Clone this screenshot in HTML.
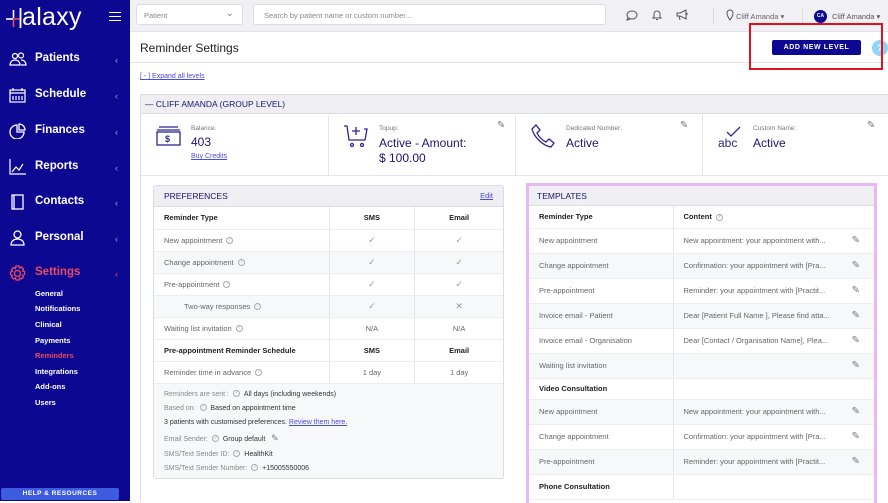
<!DOCTYPE html>
<html><head><meta charset="utf-8"><style>
*{box-sizing:border-box;margin:0;padding:0}
body{width:888px;height:501px;overflow:hidden;font-family:"Liberation Sans",sans-serif;background:#fff;position:relative;color:#333}
.a{position:absolute}
#sb{left:0;top:0;width:130px;height:501px;background:#0d0891;color:#fff}
.nav{position:absolute;left:35px;font-size:11.5px;font-weight:bold;color:#fff}
.ic{position:absolute;left:9px}
.chev{position:absolute;left:115px;font-size:9px;color:#aab}
.sub{position:absolute;left:35px;font-size:7.5px;font-weight:bold;color:#fff}
#top{left:130px;top:0;width:758px;height:32px;background:#f1f1f5;border-bottom:1px solid #e2e2ea}
.box{background:#fff;border:1px solid #dcdce4;border-radius:3px}
.g{color:#777;font-size:7.5px}
table{border-collapse:collapse;width:100%;font-size:7.5px}
td{height:22px;padding:0 10px;color:#666;border-bottom:1px solid #ececf2}
.hd td{color:#222;font-weight:bold}
.c{text-align:center;border-left:1px solid #e4e4ea}
.alt td{background:#f7f8fa}
.q{display:inline-block;width:7px;height:7px;border:1px solid #aaa;border-radius:50%;font-size:5px;line-height:5px;text-align:center;color:#aaa;margin-left:4px;vertical-align:middle}
.ck{color:#999;font-size:9px}
.t td{height:25px;padding-top:0;padding-bottom:0}
.pen{color:#777;font-size:10px;text-align:right;padding-right:14px}
</style></head><body>
<div id="sb" class="a">
 <svg class="a" style="left:6px;top:7px" width="16" height="21" viewBox="0 0 16 21"><path d="M0 12h7" stroke="#fff" stroke-width="1.6"/><path d="M7 12h8" stroke="#e94a64" stroke-width="1.6"/><path d="M7.5 3v8" stroke="#fff" stroke-width="1.6"/><path d="M7.5 13v7" stroke="#e94a64" stroke-width="1.6"/><path d="M14.5 1v20" stroke="#fff" stroke-width="1.8"/></svg>
 <div class="a" style="left:22px;top:3px;font-size:25px;color:#fff;letter-spacing:0.3px">alaxy</div>
 <div class="a" style="left:109px;top:12px;width:12px;height:9px;border-top:1.5px solid #fff;border-bottom:1.5px solid #fff"><div style="margin-top:2.5px;border-top:1.5px solid #fff"></div></div>
 <svg class="ic" style="top:52px" width="18" height="14" viewBox="0 0 18 14" fill="none" stroke="#fff" stroke-width="1.2"><circle cx="6" cy="4" r="2.5"/><path d="M1 13c0-3 2-5 5-5s5 2 5 5z"/><circle cx="12" cy="3.5" r="2.5"/><path d="M12 8c3 0 5 2 5 5h-5"/></svg>
 <div class="nav" style="top:52px">Patients</div><div class="chev" style="top:55px">&lsaquo;</div>
 <svg class="ic" style="top:88px" width="17" height="15" viewBox="0 0 17 15" fill="none" stroke="#fff" stroke-width="1.2"><rect x="1" y="2" width="15" height="12"/><path d="M1 5h15M4 0v3M13 0v3M4 8v4M7 8v4M10 8v4M13 8v4"/></svg>
 <div class="nav" style="top:88px">Schedule</div><div class="chev" style="top:91px">&lsaquo;</div>
 <svg class="ic" style="top:123px" width="17" height="16" viewBox="0 0 17 16" fill="none" stroke="#fff" stroke-width="1.3"><path d="M8 2a7 7 0 1 0 7 7H8z"/><path d="M10 1v6h6a6 6 0 0 0-6-6z"/></svg>
 <div class="nav" style="top:124px">Finances</div><div class="chev" style="top:127px">&lsaquo;</div>
 <svg class="ic" style="top:159px" width="17" height="16" viewBox="0 0 17 16" fill="none" stroke="#fff" stroke-width="1.2"><path d="M1 0v15h16M3 13l4-5 3 3 4-6"/></svg>
 <div class="nav" style="top:160px">Reports</div><div class="chev" style="top:163px">&lsaquo;</div>
 <svg class="ic" style="top:194px" width="17" height="16" viewBox="0 0 17 16" fill="none" stroke="#fff" stroke-width="1.3"><rect x="3" y="1" width="11" height="14"/><path d="M5 1v14"/></svg>
 <div class="nav" style="top:195px">Contacts</div><div class="chev" style="top:198px">&lsaquo;</div>
 <svg class="ic" style="top:230px" width="17" height="16" viewBox="0 0 17 16" fill="none" stroke="#fff" stroke-width="1.3"><circle cx="8.5" cy="4.5" r="3.5"/><path d="M2 15c0-4 3-6 6.5-6s6.5 2 6.5 6z"/></svg>
 <div class="nav" style="top:231px">Personal</div><div class="chev" style="top:234px">&lsaquo;</div>
 <svg class="ic" style="top:265px" width="17" height="17" viewBox="0 0 17 17" fill="none" stroke="#e94a64" stroke-width="1.3"><circle cx="8.5" cy="8.5" r="3"/><path d="M7 1h3l.5 2 2-1 2 2-1 2 2 .5v3l-2 .5 1 2-2 2-2-1-.5 2H7l-.5-2-2 1-2-2 1-2-2-.5V7l2-.5-1-2 2-2 2 1z"/></svg>
 <div class="nav" style="top:266px;color:#e94a64">Settings</div><div class="chev" style="top:269px;color:#e94a64">&lsaquo;</div>
 <div class="sub" style="top:289px">General</div>
 <div class="sub" style="top:304px">Notifications</div>
 <div class="sub" style="top:320px">Clinical</div>
 <div class="sub" style="top:336px">Payments</div>
 <div class="sub" style="top:351px;color:#e94a64">Reminders</div>
 <div class="sub" style="top:367px">Integrations</div>
 <div class="sub" style="top:382px">Add-ons</div>
 <div class="sub" style="top:398px">Users</div>
 <div class="a" style="left:1px;top:488px;width:118px;height:12px;background:#3c5be0;border-radius:2px;font-size:6.5px;font-weight:bold;text-align:center;line-height:12px;letter-spacing:.5px">HELP &amp; RESOURCES</div>
</div>
<div id="top" class="a">
 <div class="a box" style="left:6px;top:4px;width:107px;height:21px;font-size:7.5px;color:#888;padding:6px 7px">Patient<span style="position:absolute;right:8px;top:3px;font-size:10px;color:#888">&#8964;</span></div>
 <div class="a box" style="left:123px;top:4px;width:353px;height:21px;font-size:7.5px;color:#888;padding:6px 10px">Search by patient name or custom number...</div>
 <svg class="a" style="left:496px;top:10px" width="12" height="11" viewBox="0 0 12 11" fill="none" stroke="#555"><ellipse cx="6" cy="5" rx="5" ry="4"/><path d="M2 8l-1 2 3-1"/></svg>
 <svg class="a" style="left:522px;top:9px" width="10" height="12" viewBox="0 0 10 12" fill="none" stroke="#555"><path d="M2 8V5a3 3 0 0 1 6 0v3l1 1H1zM4 10.5h2"/></svg>
 <svg class="a" style="left:546px;top:9px" width="13" height="12" viewBox="0 0 13 12" fill="none" stroke="#555"><path d="M1 4h3l6-3v9L4 7H1zM3 7l1 4M11 4v2"/></svg>
 <div class="a" style="left:583px;top:8px;width:1px;height:16px;background:#ddd"></div>
 <svg class="a" style="left:596px;top:9px" width="8" height="12" viewBox="0 0 8 12" fill="none" stroke="#555"><path d="M4 11C1 7 1 5 1 4a3 3 0 0 1 6 0c0 1 0 3-3 7z"/></svg>
 <div class="a" style="left:606px;top:12px;font-size:7.5px;color:#666">Cliff Amanda &#9662;</div>
 <div class="a" style="left:672px;top:8px;width:1px;height:16px;background:#ddd"></div>
 <div class="a" style="left:684px;top:10px;width:13px;height:13px;border-radius:50%;background:#0d0891;color:#fff;font-size:5px;font-weight:bold;text-align:center;line-height:13px">CA</div>
 <div class="a" style="left:702px;top:12px;font-size:7.5px;color:#555;white-space:nowrap">Cliff Amanda &#9662;</div>
</div>
<div class="a" style="left:130px;top:32px;width:758px;height:31px;border-bottom:1px solid #e2e2ea"></div>
<div class="a" style="left:140px;top:41px;font-size:12px;color:#222">Reminder Settings</div>
<div class="a" style="left:772px;top:40px;width:89px;height:15px;background:#0d0891;border-radius:2px;color:#fff;font-size:7px;font-weight:bold;text-align:center;line-height:15px;letter-spacing:.6px">ADD NEW LEVEL</div>
<div class="a" style="left:872px;top:40px;width:16px;height:16px;border-radius:50%;background:#8fd3f5;color:#fff;font-size:9px;text-align:center;line-height:16px;font-weight:bold">?</div>
<div class="a" style="left:749px;top:23px;width:134px;height:47px;border:2px solid #e3131c"></div>
<div class="a" style="left:140px;top:73px;font-size:7px;color:#4a4ae0;text-decoration:underline">[ - ] Expand all levels</div>
<div class="a" style="left:140px;top:94px;width:748px;height:407px;border-left:1px solid #dcdce4;border-top:1px solid #dcdce4"></div>
<div class="a" style="left:141px;top:95px;width:747px;height:19px;background:#eeeef3;border-bottom:1px solid #dcdce4;font-size:8.5px;color:#1a1670;padding:4px 4px">&mdash; CLIFF AMANDA (GROUP LEVEL)</div>
<div class="a" style="left:141px;top:175px;width:747px;height:1px;background:#e4e4ea"></div>
<div class="a" style="left:328px;top:115px;width:1px;height:60px;background:#e4e4ea"></div>
<div class="a" style="left:515px;top:115px;width:1px;height:60px;background:#e4e4ea"></div>
<div class="a" style="left:702px;top:115px;width:1px;height:60px;background:#e4e4ea"></div>
<svg class="a" style="left:156px;top:126px" width="25" height="20" viewBox="0 0 25 20" fill="none" stroke="#2a2790" stroke-width="1.3"><path d="M3 1h19M1 4h23"/><rect x="1" y="6" width="23" height="13"/><text x="9" y="16" font-size="9" fill="#2a2790" stroke="none" font-family="Liberation Sans" font-weight="bold">$</text></svg>
<div class="a g" style="left:191px;top:125px;font-size:6.5px">Balance:</div>
<div class="a" style="left:191px;top:135px;font-size:12px;color:#1a1670">403</div>
<div class="a" style="left:191px;top:153px;font-size:7px;color:#4a4ae0;text-decoration:underline">Buy Credits</div>
<svg class="a" style="left:344px;top:124px" width="25" height="26" viewBox="0 0 25 26" fill="none" stroke="#2a2790" stroke-width="1.3"><path d="M0 2h3l2 14h16l2-11h-3M12 3v8M8 7h8"/><circle cx="8" cy="21" r="1.5"/><circle cx="18" cy="21" r="1.5"/></svg>
<div class="a g" style="left:379px;top:125px;font-size:6.5px">Topup:</div>
<div class="a" style="left:379px;top:136px;font-size:12px;color:#1a1670;line-height:15px">Active - Amount:<br>$ 100.00</div>
<div class="a" style="left:497px;top:120px;font-size:10px;color:#777">&#9998;</div>
<svg class="a" style="left:531px;top:124px" width="26" height="26" viewBox="0 0 26 26" fill="none" stroke="#2a2790" stroke-width="1.3"><path d="M5 1l4 5-3 3c2 4 5 7 9 9l3-3 5 4-3 4C12 22 3 13 1 5z"/></svg>
<div class="a g" style="left:566px;top:125px;font-size:6.5px">Dedicated Number:</div>
<div class="a" style="left:566px;top:136px;font-size:12px;color:#1a1670">Active</div>
<div class="a" style="left:680px;top:120px;font-size:10px;color:#777">&#9998;</div>
<div class="a" style="left:718px;top:136px;font-size:12px;color:#2a2790">abc</div>
<svg class="a" style="left:726px;top:126px" width="16" height="12" viewBox="0 0 16 12" fill="none" stroke="#2a2790" stroke-width="1.3"><path d="M1 6l4 4 9-9"/></svg>
<div class="a g" style="left:753px;top:125px;font-size:6.5px">Custom Name:</div>
<div class="a" style="left:753px;top:136px;font-size:12px;color:#1a1670">Active</div>
<div class="a" style="left:867px;top:120px;font-size:10px;color:#777">&#9998;</div>

<div class="a box" style="left:153px;top:185px;width:351px;height:294px;background:#f7f8fa;overflow:hidden">
 <div style="height:21px;background:#eeeef3;border-bottom:1px solid #dcdce4;padding:5px 10px;font-size:8.5px;color:#1a1670">PREFERENCES<span style="float:right;font-size:7.5px;color:#4a4ae0;text-decoration:underline">Edit</span></div>
 <table style="background:#fff">
  <tr class="hd"><td style="width:175px">Reminder Type</td><td class="c">SMS</td><td class="c">Email</td></tr>
  <tr><td>New appointment<span class="q">?</span></td><td class="c ck">&#10003;</td><td class="c ck">&#10003;</td></tr>
  <tr class="alt"><td>Change appointment<span class="q">?</span></td><td class="c ck">&#10003;</td><td class="c ck">&#10003;</td></tr>
  <tr><td>Pre-appointment<span class="q">?</span></td><td class="c ck">&#10003;</td><td class="c ck">&#10003;</td></tr>
  <tr class="alt"><td style="padding-left:30px">Two-way responses<span class="q">?</span></td><td class="c ck">&#10003;</td><td class="c ck">&#10005;</td></tr>
  <tr><td>Waiting list invitation<span class="q">?</span></td><td class="c">N/A</td><td class="c">N/A</td></tr>
  <tr class="hd"><td>Pre-appointment Reminder Schedule</td><td class="c">SMS</td><td class="c">Email</td></tr>
  <tr><td>Reminder time in advance<span class="q">?</span></td><td class="c">1 day</td><td class="c">1 day</td></tr>
 </table>
 <div style="padding:4px 10px;font-size:7px;color:#888;line-height:14px">
  <div>Reminders are sent :<span class="q">?</span> <b style="color:#333;font-weight:normal">&nbsp;All days (including weekends)</b></div>
  <div>Based on:<span class="q">?</span> <span style="color:#333">&nbsp;Based on appointment time</span></div>
  <div style="color:#333">3 patients with customised preferences. <span style="color:#4a4ae0;text-decoration:underline">Review them here.</span></div>
  <div style="line-height:16px">Email Sender:<span class="q">?</span> <span style="color:#333">&nbsp;Group default</span> &nbsp;&nbsp;<span style="font-size:9px;color:#777">&#9998;</span></div>
  <div>SMS/Text Sender ID:<span class="q">?</span> <span style="color:#333">&nbsp;HealthKit</span></div>
  <div>SMS/Text Sender Number:<span class="q">?</span> <span style="color:#333">&nbsp;+15005550006</span></div>
 </div>
</div>

<div class="a" style="left:526px;top:183px;width:351px;height:320px;border:3px solid #e8b8f5;border-bottom:none"></div>
<div class="a" style="left:529px;top:186px;width:345px;height:315px;background:#fff;overflow:hidden">
 <div style="height:20px;background:#eeeef3;border-bottom:1px solid #dcdce4;padding:5px 8px;font-size:8.5px;color:#1a1670">TEMPLATES</div>
 <table class="t">
  <tr class="hd"><td style="width:144px;border-right:1px solid #e4e4ea;height:22px">Reminder Type</td><td colspan="2" style="height:22px">Content<span class="q">?</span></td></tr>
  <tr><td style="border-right:1px solid #e4e4ea">New appointment</td><td>New appointment: your appointment with...</td><td class="pen">&#9998;</td></tr>
  <tr class="alt"><td style="border-right:1px solid #e4e4ea">Change appointment</td><td>Confirmation: your appointment with [Pra...</td><td class="pen">&#9998;</td></tr>
  <tr><td style="border-right:1px solid #e4e4ea">Pre-appointment</td><td>Reminder: your appointment with [Practit...</td><td class="pen">&#9998;</td></tr>
  <tr class="alt"><td style="border-right:1px solid #e4e4ea">Invoice email - Patient</td><td>Dear [Patient Full Name ], Please find atta...</td><td class="pen">&#9998;</td></tr>
  <tr><td style="border-right:1px solid #e4e4ea">Invoice email - Organisation</td><td>Dear [Contact / Organisation Name], Plea...</td><td class="pen">&#9998;</td></tr>
  <tr class="alt"><td style="border-right:1px solid #e4e4ea">Waiting list invitation</td><td></td><td class="pen">&#9998;</td></tr>
  <tr class="hd"><td style="border-right:1px solid #e4e4ea;height:21px">Video Consultation</td><td style="height:21px"></td><td style="height:21px"></td></tr>
  <tr class="alt"><td style="border-right:1px solid #e4e4ea">New appointment</td><td>New appointment: your appointment with...</td><td class="pen">&#9998;</td></tr>
  <tr><td style="border-right:1px solid #e4e4ea">Change appointment</td><td>Confirmation: your appointment with [Pra...</td><td class="pen">&#9998;</td></tr>
  <tr class="alt"><td style="border-right:1px solid #e4e4ea">Pre-appointment</td><td>Reminder: your appointment with [Practit...</td><td class="pen">&#9998;</td></tr>
  <tr class="hd"><td style="border-right:1px solid #e4e4ea">Phone Consultation</td><td></td><td></td></tr>
 </table>
</div>
</body></html>
